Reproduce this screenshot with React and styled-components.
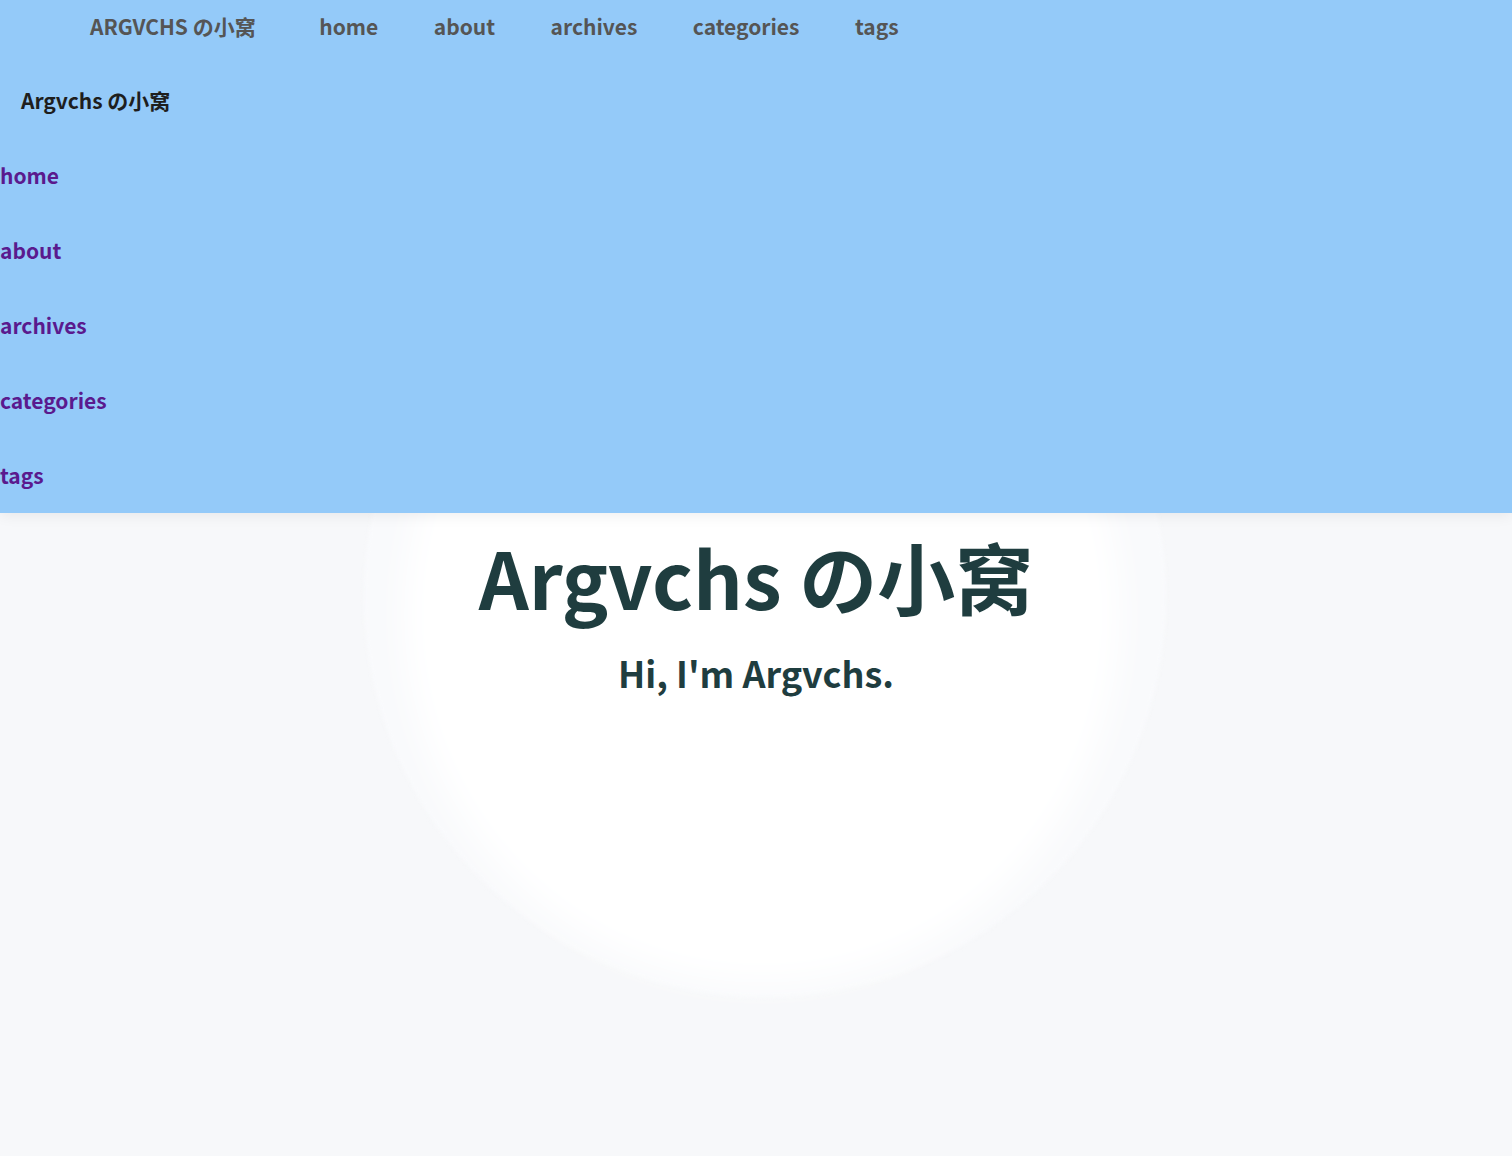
import styled, { createGlobalStyle } from "styled-components";

const GlobalStyle = createGlobalStyle`
  html, body {
    margin: 0;
    padding: 0;
    background: #f7f8fa;
    font-family: "Noto Sans CJK JP", "Noto Sans", sans-serif;
  }
  #root {
    min-height: 1156px;
  }
`

const Page = styled.div`
  position: relative;
  min-height: 1156px;
  overflow: hidden;
`

const Header = styled.header`
  position: relative;
  z-index: 2;
  background: #94caf9;
  box-shadow: 0 2px 14px rgba(0, 0, 0, 0.07);
`

const TopNav = styled.nav`
  height: 51px;
  display: flex;
  align-items: center;
  padding-left: 90px;
  gap: 55.5px;
`

const TopLink = styled.a`
  font-size: 21px;
  font-weight: 600;
  color: #555555;
  text-decoration: none;
  margin-right: ${(p) => (p.$brand ? "8px" : "0")};
  text-transform: ${(p) => (p.$brand ? "uppercase" : "none")};
`

const SideList = styled.ul`
  list-style: none;
  margin: 0;
  padding: 11px 0 1px;
`

const SideItem = styled.li`
  height: 75px;
  display: flex;
  align-items: center;
  padding-left: ${(p) => (p.$brand ? "21px" : "0")};
`

const SideLink = styled.a`
  font-size: 21px;
  font-weight: 600;
  color: ${(p) => (p.$brand ? "#1e1e1e" : "#5a1a8e")};
  text-decoration: none;
`

const Hero = styled.section`
  position: relative;
  display: flex;
  flex-direction: column;
  align-items: center;
  padding-top: 17px;
`

// soft round light spots behind the hero text
const Glow = styled.div`
  position: absolute;
  left: ${(p) => p.$x - p.$r}px;
  top: ${(p) => p.$y - p.$r}px;
  width: ${(p) => p.$r * 2}px;
  height: ${(p) => p.$r * 2 * p.$stretch}px;
  border-radius: 50%;
  background: ${(p) => p.$color};
  filter: blur(${(p) => p.$blur}px);
  z-index: 0;
`

const Title = styled.h1`
  position: relative;
  z-index: 1;
  margin: 0;
  font-size: 78px;
  font-weight: 700;
  line-height: 1.2;
  color: #1f3d3f;
`

const Subtitle = styled.h2`
  position: relative;
  z-index: 1;
  margin: 27px 0 0;
  font-size: 36px;
  font-weight: 600;
  line-height: 1.2;
  color: #1f3d3f;
`

const links = ["home", "about", "archives", "categories", "tags"]

const App = () => {
  return <Page>
    <GlobalStyle />
    <Header>
      <TopNav>
        <TopLink $brand href="#">Argvchs の小窝</TopLink>
        {links.map((l) => <TopLink key={l} href="#">{l}</TopLink>)}
      </TopNav>
      <SideList>
        <SideItem $brand><SideLink $brand href="#">Argvchs の小窝</SideLink></SideItem>
        {links.map((l) => <SideItem key={l}><SideLink href="#">{l}</SideLink></SideItem>)}
      </SideList>
    </Header>
    <Hero>
      <Glow $x={765} $y={83} $r={401} $stretch={1} $color="#f9fafc" $blur={2} />
      <Glow $x={762} $y={91} $r={358} $stretch={1.03} $color="#ffffff" $blur={18} />
      <Title>Argvchs の小窝</Title>
      <Subtitle>Hi, I'm Argvchs.</Subtitle>
    </Hero>
  </Page>
}

export default App;
